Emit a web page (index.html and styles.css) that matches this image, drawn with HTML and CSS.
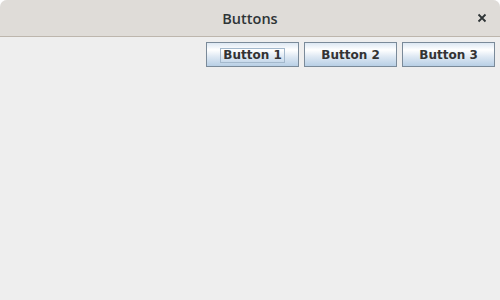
FILE: index.html
```html
<!DOCTYPE html>
<html>
<head>
<meta charset="utf-8">
<link rel="stylesheet" href="styles.css">
</head>
<body>
<div class="window">
  <div class="titlebar">
    <span class="title">Buttons</span>
    <span class="close">
      <svg width="10" height="10" viewBox="0 0 10 10"><path d="M1.5 1.5 L8.5 8.5 M8.5 1.5 L1.5 8.5" stroke="#2e3436" stroke-width="1.8" stroke-linecap="butt"/></svg>
    </span>
  </div>
  <div class="content">
    <button class="btn focused"><span class="label">Button 1</span></button>
    <button class="btn"><span class="label">Button 2</span></button>
    <button class="btn"><span class="label">Button 3</span></button>
  </div>
</div>
</body>
</html>
```
FILE: styles.css
```css
html, body {
  margin: 0;
  padding: 0;
  background: #ffffff;
}
.window {
  width: 500px;
  height: 300px;
  background: #eeeeee;
  display: flex;
  flex-direction: column;
  overflow: hidden;
  border-radius: 7px 7px 0 0;
}
.titlebar {
  height: 36px;
  flex: none;
  background: #dfdcd8;
  border-bottom: 1px solid #bdb6ad;
  display: flex;
  align-items: center;
  justify-content: center;
  position: relative;
}
.title {
  font-family: "Open Sans", "DejaVu Sans", sans-serif;
  font-weight: 600;
  font-size: 14.5px;
  color: #2e3436;
  margin-top: 1px;
}
.close {
  position: absolute;
  right: 13px;
  top: 13px;
  width: 10px;
  height: 10px;
  display: flex;
}
.content {
  display: flex;
  justify-content: flex-end;
  gap: 5px;
  padding: 5px 5px 0 0;
}
.btn {
  width: 93px;
  height: 25px;
  box-sizing: border-box;
  border: 1px solid #7a8a99;
  border-radius: 0;
  padding: 0;
  margin: 0;
  background: linear-gradient(to bottom, #dde8f3 0%, #ffffff 30%, #dde8f3 60%, #b8cfe5 100%);
  font-family: "DejaVu Sans", sans-serif;
  font-weight: bold;
  font-size: 12px;
  color: #333333;
  display: flex;
  align-items: center;
  justify-content: center;
}
.label {
  padding: 0 2px;
  line-height: 13px;
  margin-top: 1px;
  border: 1px solid transparent;
}
.focused .label {
  border-color: #a3b8cc;
}
```
